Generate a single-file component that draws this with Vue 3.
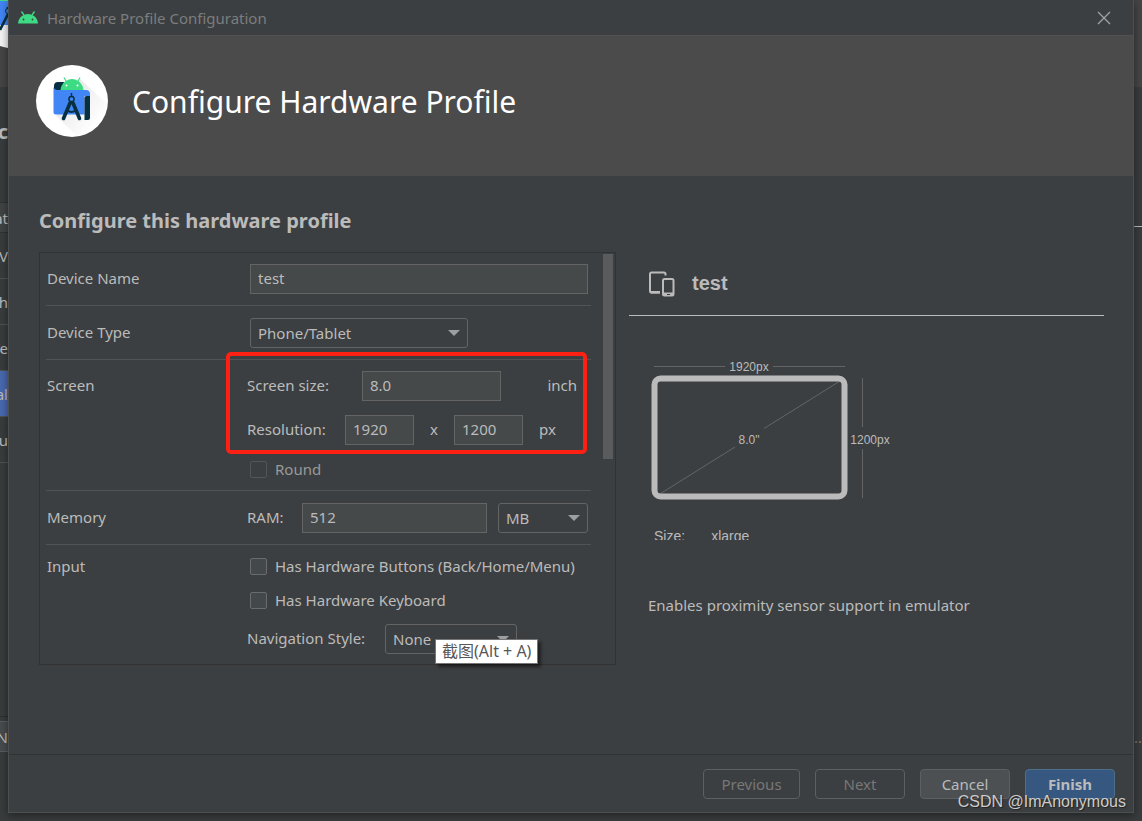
<template>
  <div class="desktop">
    <div class="behind left" aria-hidden="true">
      <div class="behind-banner">
        <svg width="8" height="48" viewBox="0 0 8 48">
          <path d="M0 0h8v48Q3 47 0 46z" fill="#f4f4f4" />
          <path d="M0 0h8v25H0z" fill="#4285f4" />
          <path d="M0 0h8v1H0z" fill="#3ddc84" />
          <path d="M8 7v2M8 14L0 30" stroke="#073042" stroke-width="2.6" fill="none" />
          <circle cx="8" cy="11" r="2.5" stroke="#073042" fill="none" />
        </svg>
      </div>
      <div class="behind-title">nc</div>
      <div
        v-for="row in behindRows"
        :key="row.text"
        class="behind-row"
        :class="{ head: row.head, picked: row.picked }"
      >{{ row.text }}</div>
      <div class="behind-rest"></div>
      <div class="behind-button">N</div>
    </div>

    <main class="window">
      <header class="titlebar">
        <svg class="droid" width="20" height="13" viewBox="0 0 20 13">
          <path d="M6 4L3.500 .5M14 4L16.500 .5" fill="none" stroke="#3ddc84" stroke-width="1.300" />
          <path d="M0 12.500C.5 6.500 5 3 10 3s9.500 3.500 10 9.500z" fill="#3ddc84" />
          <circle cx="5.500" cy="8.500" r=".9" fill="#3c3f41" />
          <circle cx="14.500" cy="8.500" r=".9" fill="#3c3f41" />
        </svg>
        <span class="caption">Hardware Profile Configuration</span>
        <button class="close" type="button" aria-label="Close">
          <svg width="14" height="14" viewBox="0 0 14 14">
            <path d="M1 1l12 12M13 1L1 13" stroke="#a0a2a3" stroke-width="1.300" />
          </svg>
        </button>
      </header>

      <div class="banner">
        <svg width="72" height="72" viewBox="0 0 72 72">
          <defs>
            <linearGradient id="fade" x1="0" y1="0" x2="1" y2="1">
              <stop offset="0" stop-color="#d4d4d4" />
              <stop offset=".8" stop-color="#fff" />
            </linearGradient>
          </defs>
          <circle cx="36" cy="36" r="36" fill="#fff" />
          <path d="M44 14L70 38C69 53 57 68 41 71L20 51z" fill="url(#fade)" opacity=".75" />
          <path d="M28 17h-6a4 4 0 0 0-4 4v7l8-3z" fill="#073042" />
          <path d="M17.500 22q1 3 4 3H50a4 4 0 0 1 4 4v2h-5.500v18.500H20a2.500 2.500 0 0 1-2.500-2.500z" fill="#4285f4" />
          <path d="M24.500 25C25 19 30 14 36 14S47 19 47.500 25z" fill="#3ddc84" />
          <path d="M30.500 17l-2.500-4.500M41.500 17l2.500-4.500" stroke="#3ddc84" stroke-width="1.200" />
          <circle cx="30.500" cy="20.500" r="1" fill="#fff" />
          <circle cx="41.500" cy="20.500" r="1" fill="#fff" />
          <path d="M48.500 33q0-2 2-2H54v22q0 2-2 2h-3.500z" fill="#073042" />
          <path d="M35.500 28v3" stroke="#073042" stroke-width="1.500" />
          <path d="M34 38l-6.500 15.500M37 38l6.500 15.500" stroke="#073042" stroke-width="3.600" stroke-linecap="round" />
          <path d="M31 45q4.500 4 9 0" stroke="#073042" stroke-width="2" fill="none" />
          <circle cx="35.500" cy="34" r="2.600" fill="#4285f4" stroke="#073042" stroke-width="1.500" />
        </svg>
        <h1>Configure Hardware Profile</h1>
      </div>

      <section class="content">
        <h2>Configure this hardware profile</h2>
        <div class="columns">
          <form class="form" @submit.prevent>
            <div class="rows">
              <div class="row tight">
                <label for="name">Device Name</label>
                <div class="fields">
                  <input id="name" v-model="name" class="box wide" type="text" />
                </div>
              </div>

              <div class="row">
                <label for="type">Device Type</label>
                <div class="fields">
                  <span class="select type">
                    <select id="type" v-model="type">
                      <option>Phone/Tablet</option>
                      <option>Wear OS</option>
                      <option>Android TV</option>
                    </select>
                    <svg width="12" height="6" viewBox="0 0 12 6"><path d="M0 0h12L6 6z" /></svg>
                  </span>
                </div>
              </div>

              <div class="row tight">
                <span class="name">Screen</span>
                <div class="fields stack">
                  <div class="marked">
                    <div class="line">
                      <label class="size-label" for="size">Screen size:</label>
                      <input id="size" v-model="size" class="box size" type="text" />
                      <span class="unit">inch</span>
                    </div>
                    <div class="line">
                      <label class="res-label" for="width">Resolution:</label>
                      <input id="width" v-model="width" class="box small" type="text" />
                      <span class="times">x</span>
                      <input v-model="height" class="box small" type="text" aria-label="Vertical resolution" />
                      <span class="px">px</span>
                    </div>
                  </div>
                  <label class="check off"><input type="checkbox" disabled />Round</label>
                </div>
              </div>

              <div class="row">
                <span class="name">Memory</span>
                <div class="fields">
                  <label class="ram-label" for="ram">RAM:</label>
                  <input id="ram" v-model="ram" class="box ram" type="text" />
                  <span class="select mb">
                    <select v-model="unit" aria-label="RAM unit">
                      <option>MB</option>
                      <option>GB</option>
                    </select>
                    <svg width="12" height="6" viewBox="0 0 12 6"><path d="M0 0h12L6 6z" /></svg>
                  </span>
                </div>
              </div>

              <div class="row tight input-row">
                <span class="name">Input</span>
                <div class="fields stack">
                  <label class="check"><input v-model="buttons" type="checkbox" />Has Hardware Buttons (Back/Home/Menu)</label>
                  <label class="check"><input v-model="keyboard" type="checkbox" />Has Hardware Keyboard</label>
                  <div class="line">
                    <label class="nav-label" for="nav">Navigation Style:</label>
                    <span class="select nav">
                      <select id="nav" v-model="nav">
                        <option>None</option>
                        <option>D-pad</option>
                        <option>Trackball</option>
                      </select>
                      <svg width="12" height="6" viewBox="0 0 12 6"><path d="M0 0h12L6 6z" /></svg>
                      <span class="tooltip" role="tooltip">截图(Alt + A)</span>
                    </span>
                  </div>
                </div>
              </div>
            </div>
            <div class="scroll"><div class="thumb"></div></div>
          </form>

          <aside class="preview">
            <div class="preview-head">
              <svg width="26" height="26" viewBox="0 0 26 26">
                <path d="M16.500 4.500V3A1.500 1.500 0 0 0 15 1.500H2.500A1.500 1.500 0 0 0 1 3v17a1.500 1.500 0 0 0 1.500 1.500H11" fill="none" stroke="#bbb" stroke-width="2" />
                <path d="M1 20h10v2.500H1.500z" fill="#bbb" />
                <rect x="14" y="8" width="10.500" height="16.500" rx="1.500" fill="none" stroke="#bbb" stroke-width="2" />
                <path d="M14 21.500h10.500v3H14z" fill="#bbb" />
                <path d="M18 23.500h3" stroke="#3c3f41" />
              </svg>
              <strong>{{ name }}</strong>
            </div>
            <svg class="diagram" width="250" height="142" viewBox="0 0 250 142">
              <path d="M5 8.500h71M124 8.500h72M213.500 20v49M213.500 91v49M10 136.500L86 89M115 70.500L191 23" fill="none" stroke="#646464" />
              <rect x="5.500" y="20.500" width="190" height="118" rx="6" fill="none" stroke="#bbb" stroke-width="6" />
              <text x="100" y="13" text-anchor="middle">{{ width }}px</text>
              <text x="100" y="86" text-anchor="middle">{{ size }}"</text>
              <text x="221" y="86" text-anchor="middle">{{ height }}px</text>
            </svg>
            <div class="category"><span>Size:</span><span>xlarge</span></div>
            <p class="hint">Enables proximity sensor support in emulator</p>
          </aside>
        </div>
      </section>

      <footer class="actions">
        <button class="previous" type="button" disabled>Previous</button>
        <button type="button" disabled>Next</button>
        <button class="cancel" type="button">Cancel</button>
        <button class="finish" type="button">Finish</button>
      </footer>
    </main>

    <div class="behind right" aria-hidden="true">
      <div class="behind-banner"></div>
      <div class="rule"></div>
      <div class="rest">…</div>
    </div>

    <div class="watermark">CSDN @ImAnonymous</div>
  </div>
</template>

<script setup>
import { ref } from 'vue'

const name = ref('test')
const type = ref('Phone/Tablet')
const size = ref('8.0')
const width = ref('1920')
const height = ref('1200')
const ram = ref('512')
const unit = ref('MB')
const buttons = ref(false)
const keyboard = ref(false)
const nav = ref('None')

const behindRows = [
  { text: 'at', head: true },
  { text: 'V' },
  { text: 'h' },
  { text: 'We' },
  { text: 'al', picked: true },
  { text: 'Au' }
]
</script>

<style>
body { margin: 0; background: #3c3f41; }
</style>

<style scoped>
* { box-sizing: border-box; }
.desktop {
  position: relative; display: grid; grid-template-columns: 8px 1fr 8px;
  min-height: 100vh; overflow: hidden; background: #393c3d; color: #bbb;
  font-family: "Noto Sans", "Noto Sans CJK SC", sans-serif; font-size: 15px; line-height: 20px;
}
.window {
  z-index: 1; display: flex; flex-direction: column; margin-bottom: 8px;
  background: #3c3f41; border: 1px solid #4d4f50; border-top: 0; box-shadow: 0 2px 8px rgba(0,0,0,.45);
}
.behind { display: flex; flex-direction: column; overflow: hidden; min-width: 0; }
.behind-banner { flex: none; height: 87px; background: #454545; }
.behind-banner svg { display: block; }
.behind-title { height: 115px; padding-top: 35px; display: flex; justify-content: flex-end; font-size: 20px; font-weight: 700; }
.behind-row { display: flex; flex: none; align-items: center; justify-content: flex-end; height: 46px; border-bottom: 1px solid #505253; }
.behind-row.head { height: 31px; background: #414445; border-top: 1px solid #2f3132; border-bottom-color: #2f3132; }
.behind-row.picked { background: #4869ae; }
.behind-rest { height: 254px; border-bottom: 1px solid #2c2e2f; }
.behind-button { display: flex; align-items: center; justify-content: flex-end; height: 31px; margin-top: 4px; background: #484b4d; border: 1px solid #5a5d5e; border-width: 1px 0; }
.rule { height: 140px; border-bottom: 1px solid #bbb; }
.rest { flex: 1; padding-top: 500px; color: #777; }

.titlebar { display: flex; align-items: center; height: 36px; padding: 0 22px 0 9px; border-bottom: 1px solid #4f5152; }
.caption { margin-left: 9px; color: #7b7d7e; }
.close { display: flex; margin-left: auto; padding: 0; border: 0; background: none; }
.banner { display: flex; align-items: center; gap: 24px; height: 140px; padding: 0 27px 10px; background: #4b4b4b; }
h1 { margin: 0; padding-top: 2px; color: #fff; font-size: 30px; line-height: 40px; font-weight: 400; }
.content { flex: 1; padding: 31px 29px 0 30px; }
h2 { margin: 0 0 17px; font-size: 20px; line-height: 28px; font-weight: 700; }
.columns { display: grid; grid-template-columns: 577fr 475fr; gap: 13px; align-items: start; }

.form { display: flex; min-width: 0; border: 1px solid #323232; }
.rows { flex: 1; min-width: 0; padding: 0 0 10px 6px; }
.row { display: grid; grid-template-columns: 200px 1fr; padding: 12px 0 11px 1px; line-height: 28px; border-bottom: 1px solid #515354; }
.row.tight { padding-top: 11px; }
.row:last-child { padding-bottom: 0; border-bottom: 0; }
.fields { display: flex; align-items: center; min-width: 0; }
.line { display: flex; align-items: center; white-space: nowrap; }
.line > label, .line > span:not(.select), .ram-label { padding-bottom: 2px; }
.stack { flex-direction: column; align-items: stretch; gap: 14px; }
.marked { position: relative; display: flex; flex-direction: column; gap: 14px; }
.marked::after { content: ""; position: absolute; inset: -19px 4px -9px -21px; border: 4px solid #fd2013; border-radius: 5px; pointer-events: none; }
.box {
  height: 30px; min-width: 0; padding: 0 7px 2px; border: 1px solid #646464; border-radius: 0;
  background: #45494a; color: #bbb; font: inherit; outline: none;
}
.wide { flex: 1; margin: 0 3px; }
.size-label { width: 115px; }
.size { width: 139px; }
.unit { margin-left: auto; padding-right: 14px; }
.res-label { width: 98px; }
.small { width: 69px; }
.times { width: 40px; text-align: center; }
.px { margin-left: 16px; }
.ram-label { width: 55px; }
.ram { flex: 1; }
.select { position: relative; display: grid; align-items: center; height: 30px; }
.select select {
  grid-area: 1 / 1; width: 100%; height: 30px; padding: 0 7px; border: 1px solid #646464; border-radius: 3px;
  appearance: none; background: #3c3f41; color: #bbb; font: inherit; outline: none;
}
.select svg { grid-area: 1 / 1; justify-self: end; margin-right: 8px; fill: #9c9fa1; pointer-events: none; }
.type { width: 218px; margin-left: 3px; }
.mb { width: 90px; margin: 0 3px 0 11px; }
.nav-label { width: 138px; }
.nav { width: 132px; }
.check { display: flex; align-items: center; gap: 8px; height: 20px; line-height: 20px; white-space: nowrap; }
.check input {
  width: 17px; height: 17px; margin: 0 0 0 3px; appearance: none;
  border: 1px solid #6b6b6b; border-radius: 2px; background: #43494a;
}
.check.off { color: #999; }
.check.off input { border-color: #545556; background: #3c3f41; }
.input-row { line-height: 20px; }
.tooltip {
  position: absolute; left: 50px; top: 15px; z-index: 2; padding: 0 6px; border: 1px solid #767676;
  background: #fff; color: #575757; font-size: 16px; line-height: 23px; white-space: nowrap; box-shadow: 3px 3px 3px rgba(0,0,0,.5);
}
.scroll { width: 24px; padding: 1px 2px 0 12px; }
.thumb { height: 205px; background: #595b5d; }

.preview { min-width: 0; }
.preview-head { display: flex; align-items: center; gap: 17px; height: 64px; padding-left: 20px; border-bottom: 1px solid #bbb; }
.preview-head strong { padding-bottom: 2px; font-family: "Liberation Sans", sans-serif; font-size: 20px; }
.diagram { display: block; margin: 42px 0 0 20px; }
.diagram text { fill: #bbb; font-family: "Liberation Sans", sans-serif; font-size: 12px; }
.category { display: flex; gap: 26px; height: 14px; margin: 26px 0 0 25px; overflow: hidden; font-family: "Liberation Sans", sans-serif; font-size: 14px; line-height: 20px; }
.hint { margin: 55px 0 0 19px; }

.actions { display: flex; justify-content: flex-end; gap: 15px; padding: 14px 18px 13px; border-top: 1px solid #323232; }
.actions button { width: 90px; height: 30px; padding: 0; border: 1px solid #5e6060; border-radius: 4px; background: #3c3f41; color: #bbb; font: inherit; }
.actions button:disabled { color: #777; }
.actions .previous { width: 97px; }
.actions .cancel { background: #4c5052; }
.actions .finish { border-color: #4c708c; background: #365880; font-weight: 700; }
.watermark { position: absolute; right: 16px; bottom: 9px; z-index: 3; color: #ccc; font-family: "Liberation Sans", sans-serif; font-size: 16px; text-shadow: 1px 1px 1px #222; }
</style>
